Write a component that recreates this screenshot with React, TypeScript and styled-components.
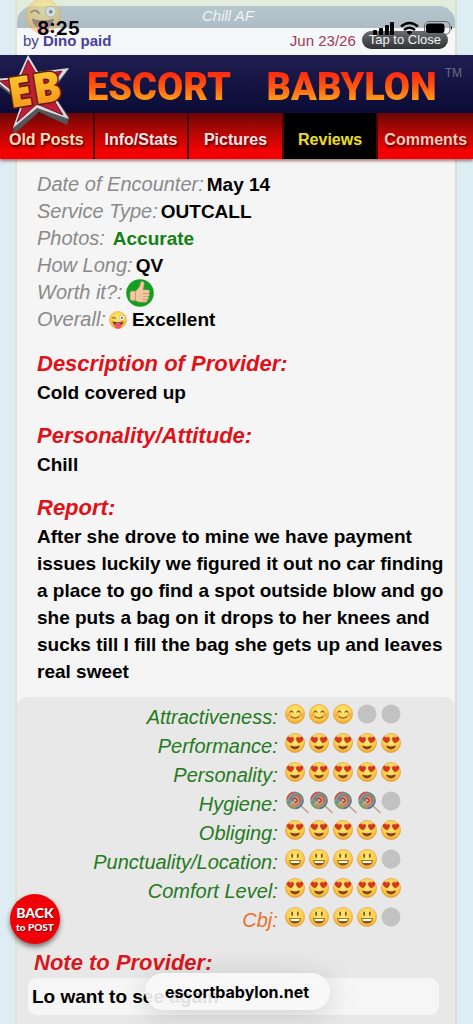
import React from "react";
import styled, { createGlobalStyle } from "styled-components";

const Global = createGlobalStyle`
  * { box-sizing: border-box; }
  body { margin: 0; background: #e0eef4; color: #000; font-family: "Liberation Sans", Arial, sans-serif; }
  h1, h2, p, dl, dd, dt { margin: 0; }
  button { border: 0; cursor: pointer; font-family: inherit; }
  a { text-decoration: none; color: inherit; }
  svg { display: block; flex: none; }
`;

const Page = styled.div`
  position: relative;
  min-height: 100vh;
  overflow: hidden;
  background: linear-gradient(90deg, #deedf3, #e2eff5 50%, #dceef4);
`;

const Card = styled.article`
  margin: 0 16px 0 15px;
  border-left: 2px solid #e0e4cd;
  border-right: 2px solid #dcded2;
  background: #f5f5f5;
`;

const CardTop = styled.header`
  padding-top: 6px;
  background: #e2ecdc;
`;

const Caption = styled.p`
  height: 22px;
  padding-right: 16px;
  border-radius: 16px 16px 0 0;
  background: linear-gradient(#b6c6ce, #adbcc5);
  color: #eef3f5;
  font: italic 15px/20px "Liberation Sans", sans-serif;
  text-align: center;
`;

const Byline = styled.div`
  display: flex;
  align-items: center;
  height: 27px;
  padding: 0 6px 2px;
  background: #f6f7f9;
  font-size: 15px;
  color: #45419c;
`;

const Posted = styled.time`
  margin-left: auto;
  color: #9c3b51;
  font-size: 15px;
`;

const CloseButton = styled.button`
  height: 18px;
  margin: 0 1px 2px 6px;
  padding: 0 7px;
  border-radius: 9px;
  background: linear-gradient(#6a6e70, #303234);
  color: #f2f2f2;
  font-size: 13px;
  line-height: 18px;
  white-space: nowrap;
`;

const SiteHeader = styled.header`
  position: relative;
  box-shadow: 0 2px 3px rgba(90, 0, 0, 0.5);
`;

const Banner = styled.div`
  height: 58px;
  padding: 0 11px 0 87px;
  display: flex;
  align-items: flex-start;
  justify-content: space-between;
  background: linear-gradient(#1f1e50, #0b0b36);
`;

const SiteName = styled.h1`
  display: flex;
  flex: 1;
  justify-content: space-between;
  padding-right: 8px;
  font: 900 38px/64px Roboto, sans-serif;
  background: linear-gradient(#ff2a10 28%, #ff5a10 50%, #ffa21c 72%);
  background-clip: text;
  -webkit-text-fill-color: transparent;
`;

const Trade = styled.span`
  padding-top: 10px;
  font-size: 12px;
  line-height: 16px;
  color: #6a6984;
`;

const Badge = styled.a`
  position: absolute;
  left: 0;
  top: 0;
`;

const Tabs = styled.nav`
  display: grid;
  grid-template-columns: repeat(5, minmax(0, 1fr));
`;

const Tab = styled.a<{ $active?: boolean; $tone?: string }>`
  height: 46px;
  padding-top: 5px;
  border-right: 2px solid #4c0202;
  background: ${(p) => (p.$active ? "#000" : "linear-gradient(#6a0705, #a80805 35%, #ee0303 80%, #f60000)")};
  color: ${(p) => (p.$active ? "#e4e02a" : p.$tone || "#fbe3e3")};
  font: bold 16px/44px "Liberation Sans", Arial, sans-serif;
  text-align: center;
  text-shadow: 1px 2px 2px rgba(50, 0, 0, 0.8);
  white-space: nowrap;
  &:last-child { border-right: 0; }
`;

const Details = styled.div`
  padding: 12px 0 12px 20px;
`;

const Facts = styled.dl`
  margin-bottom: 16px;
`;

const Fact = styled.div`
  display: flex;
  align-items: center;
  height: 27px;
  gap: 3px;
  font-size: 20px;
`;

const FactName = styled.dt`
  color: #8a8a8a;
  font-style: italic;
`;

const FactValue = styled.dd<{ $good?: boolean }>`
  display: flex;
  align-items: center;
  gap: 5px;
  padding-left: ${(p) => (p.$good ? "5px" : "0")};
  color: ${(p) => (p.$good ? "#128012" : "#000")};
  font-size: 19px;
  font-weight: bold;
`;

const Section = styled.section`
  & + & { margin-top: 15px; }
`;

const Heading = styled.h2`
  color: #e01119;
  font: italic bold 22px/30px "Liberation Sans", sans-serif;
`;

const Body = styled.p`
  font-size: 19px;
  font-weight: bold;
  line-height: 27px;
`;

const Ratings = styled.section`
  padding: 6px 0 11px;
  border-radius: 10px 10px 0 0;
  background: #e8e8e8;
`;

const Rating = styled.div`
  display: grid;
  grid-template-columns: 3fr 2fr;
  height: 29px;
`;

const RatingName = styled.dt<{ $accent?: boolean }>`
  padding-right: 2px;
  color: ${(p) => (p.$accent ? "#e8702c" : "#247a1c")};
  font-size: 20px;
  font-style: italic;
  line-height: 29px;
  text-align: right;
`;

const Marks = styled.dd`
  display: flex;
  gap: 4px;
  padding: 1px 0 0 5px;
`;

const Note = styled.div`
  padding: 13px 16px 0 11px;
  ${Heading} { padding-left: 6px; color: #d81820; }
`;

const NoteText = styled.p`
  height: 37px;
  padding-left: 4px;
  border-radius: 9px;
  background: #f6f6f6;
  font-size: 19px;
  font-weight: bold;
  line-height: 37px;
`;

const BackButton = styled.a`
  position: absolute;
  left: 10px;
  top: 894px;
  display: flex;
  flex-direction: column;
  align-items: center;
  justify-content: center;
  width: 50px;
  height: 50px;
  border-radius: 50%;
  background: #f00006;
  box-shadow: 0 3px 5px rgba(0, 0, 0, 0.5);
  color: #fff;
  font: 900 10px/13px Lato, sans-serif;
  text-shadow: 1px 1px 1px rgba(70, 0, 0, 0.8);
  white-space: nowrap;
  strong { font-size: 14px; line-height: 16px; font-weight: 900; }
`;

const StatusTime = styled.time`
  position: absolute;
  left: 37px;
  top: 18px;
  font: bold 19px/22px Inter, sans-serif;
`;

const StatusIcons = styled.div`
  position: absolute;
  right: 20px;
  top: 21px;
`;

const AddressPill = styled.button`
  position: absolute;
  left: 50%;
  bottom: 16px;
  margin-left: -92px;
  width: 185px;
  height: 37px;
  border-radius: 19px;
  background: rgba(248, 248, 248, 0.9);
  box-shadow: 0 4px 30px rgba(0, 0, 0, 0.16);
  color: #000;
  font: bold 16px/36px Inter, sans-serif;
`;

type Kind = "smile" | "love" | "candy" | "grin" | "none";

function Defs() {
  return (
    <svg width="0" height="0" style={{ position: "absolute" }} aria-hidden="true">
      <defs>
        <radialGradient id="face" cx="50%" cy="38%" r="65%">
          <stop offset="0" stopColor="#ffec78" />
          <stop offset="0.65" stopColor="#fccd48" />
          <stop offset="1" stopColor="#ea982e" />
        </radialGradient>
        <linearGradient id="gold" x1="0" y1="0" x2="0" y2="1">
          <stop offset="0" stopColor="#ffd83a" />
          <stop offset="1" stopColor="#f58a16" />
        </linearGradient>
      </defs>
    </svg>
  );
}

function Mark({ kind }: { kind: Kind }) {
  if (kind === "none")
    return <svg width="20" height="20" viewBox="0 0 20 20"><circle cx="10" cy="10" r="9.5" fill="#c2c2c2" /></svg>;
  if (kind === "candy")
    return (
      <svg width="20" height="20" viewBox="0 0 20 20" overflow="visible">
        <path d="M16 15l7 6.500" stroke="#c9a184" strokeWidth="1.700" strokeLinecap="round" />
        <circle cx="10" cy="9.500" r="8.700" fill="#b5b498" />
        <g fill="none" strokeWidth="2">
          <path d="M2 8.500A8 8 0 0 1 10 1.500" stroke="#c9544a" />
          <path d="M10 1.800A8 8 0 0 1 17.800 9" stroke="#5b8f92" />
          <path d="M17.800 9A8 8 0 0 1 11 17.300" stroke="#497fa8" />
          <path d="M11 17.300A8 8 0 0 1 2.200 9.500" stroke="#79986a" />
          <path d="M4.800 12.500C3.500 8 6.500 4 10.500 4.300" stroke="#4a8c9c" />
          <path d="M10.500 4.300c4 .3 5.800 4 4.200 7.500" stroke="#d2523f" />
          <path d="M14.700 11.800c-2 3.800-6.500 3.800-8 1" stroke="#d77a45" />
          <path d="M7.500 10.500C6.500 7 10.500 6 12 8.500c.7 2-1 3.500-2.500 2.500" stroke="#b9433c" strokeWidth="1.700" />
        </g>
      </svg>
    );
  return (
    <svg width="20" height="20" viewBox="0 0 20 20">
      <circle cx="10" cy="10" r="9.600" fill="url(#face)" stroke="#e39a38" strokeWidth="0.600" />
      {kind === "smile" && (
        <g fill="none" stroke="#81512a" strokeWidth="1.100" strokeLinecap="round">
          <circle cx="3.800" cy="11" r="2" fill="#f59549" stroke="none" opacity="0.700" />
          <circle cx="16.200" cy="11" r="2" fill="#f59549" stroke="none" opacity="0.700" />
          <path d="M5 8.300q1.500-2.300 3 0M12 8.300q1.500-2.300 3 0M6 12.500q4 3.300 8 0" />
        </g>
      )}
      {kind === "love" && (
        <>
          <g fill="#d93524" stroke="#a72c1b" strokeWidth="0.400">
            <path d="M6.200 10C3.500 9 1.600 7.200 2 5.200 2.600 3.600 4.700 3.500 5.400 4.900 6.400 3.700 8.500 4 8.800 5.600c.2 1.800-1 3-2.600 4.400z" />
            <path d="M13.800 10c2.700-1 4.600-2.800 4.200-4.800-.6-1.600-2.700-1.700-3.400-.3-1-1.200-3.100-.9-3.400.7-.2 1.800 1 3 2.600 4.400z" />
          </g>
          <path d="M5 12.600q5 1.600 10 0-1 3.800-5 3.800t-5-3.800z" fill="#7f421b" />
        </>
      )}
      {kind === "grin" && (
        <>
          <g fill="#76502a"><ellipse cx="7.200" cy="6.800" rx="0.900" ry="2.300" /><ellipse cx="12.800" cy="6.800" rx="0.900" ry="2.300" /></g>
          <path d="M4 11.300h12q-.8 5.200-6 5.200t-6-5.200z" fill="#805322" />
          <path d="M5.200 12h9.600q-.4 2-1 2H6.200q-.7 0-1-2z" fill="#fff8df" />
        </>
      )}
    </svg>
  );
}

function Wink({ size }: { size: number }) {
  return (
    <svg width={size} height={size} viewBox="0 0 20 20">
      <circle cx="10" cy="10" r="9.600" fill="url(#face)" stroke="#dfa048" strokeWidth="0.400" />
      <path d="M3.500 7.800q2.500-2 4.200.7" fill="none" stroke="#7c4b28" strokeWidth="1.100" strokeLinecap="round" />
      <circle cx="14.300" cy="7.600" r="3" fill="#fffdf2" stroke="#a7977c" strokeWidth="0.500" />
      <circle cx="14.300" cy="7.600" r="1" fill="#303020" />
      <path d="M3.800 11.400q6.200 2.300 12.400 0-.7 5.600-6.200 5.600t-6.200-5.600z" fill="#734024" />
      <path d="M6.600 14.200q3.500-2.200 6.800 0v2.600q0 3-3.400 3t-3.400-3z" fill="#f04c78" />
    </svg>
  );
}

function Thumb() {
  return (
    <svg width="28" height="28" viewBox="0 0 28 28">
      <circle cx="14" cy="14" r="13.800" fill="#12a022" />
      <path d="M4 14q0-2 2-2h3.500c2.500-2 4.500-4.500 5-8 .3-2.600 3.700-2 3.700 1 0 2.200-.8 4-1.200 5.800h4.800c2.300 0 2.600 3 .8 3.500 1.400.9 1 3-.4 3.300 1.100 1 .5 2.900-.8 3 .5 1.500-.5 2.600-2 2.600-5 .2-7.400.1-9.400-1.400H6q-2 0-2-2z" fill="#f0c9a3" stroke="#a77d56" strokeWidth="0.600" />
      <path d="M9.500 12v9.500M17 14.500h5M17 17.700h5M16.500 20.700h4.500" stroke="#bd8c68" strokeWidth="0.800" fill="none" />
    </svg>
  );
}

function StarLogo() {
  return (
    <svg width="74" height="76" viewBox="0 0 74 76" overflow="visible">
      <path d="M28 0L38 17 69 14 52 37 69 62 67 70 39 57 14 79 13 72 22 49-6 27 18 24z" fill="#55555a" />
      <path d="M28 0L38 17 69 13 51 36 69 64 37 53 13 73 22 47-6 24 18 22z" fill="#d9d9de" />
      <path d="M28 5L37 20 62 16 48 36 63 60 37 49 17 67 25 46 0 26 20 24z" fill="#c01c38" stroke="#76152b" strokeWidth="1" />
      <g transform="rotate(-9 35 34)" fontFamily="Open Sans, sans-serif" fontWeight="800" fontSize="42" fill="url(#gold)" stroke="#5d1d08" strokeWidth="3" paintOrder="stroke" strokeLinejoin="round">
        <text x="8" y="49">E</text>
        <text x="33" y="49">B</text>
      </g>
    </svg>
  );
}

function SystemIcons() {
  return (
    <svg width="80" height="15" viewBox="0 0 80 15" role="img" aria-label="Signal, wifi and battery">
      <rect x="0" y="9" width="4" height="5" rx="1" />
      <rect x="6" y="7" width="4" height="7" rx="1" />
      <rect x="12" y="4" width="4" height="10" rx="1" />
      <rect x="17" y="1" width="4" height="13" rx="1" />
      <g fill="none" stroke="#000" strokeWidth="2.600">
        <path d="M28 5.500q8.500-7 17 0M31 9q5.500-4.500 11 0" />
      </g>
      <path d="M33.500 11q3-2.300 6 0l-3 3z" />
      <rect x="51.500" y="0.500" width="25.500" height="13" rx="4.500" fill="none" stroke="#666" />
      <rect x="53" y="2.500" width="18.500" height="9.500" rx="3" />
      <path d="M78 5q2 2 0 4z" />
    </svg>
  );
}

const sections = [
  ["Description of Provider:", "Cold covered up"],
  ["Personality/Attitude:", "Chill"],
  ["Report:", "After she drove to mine we have payment issues luckily we figured it out no car finding a place to go find a spot outside blow and go she puts a bag on it drops to her knees and sucks till I fill the bag she gets up and leaves real sweet"],
];

const ratings: [string, Kind, number][] = [
  ["Attractiveness:", "smile", 3],
  ["Performance:", "love", 5],
  ["Personality:", "love", 5],
  ["Hygiene:", "candy", 4],
  ["Obliging:", "love", 5],
  ["Punctuality/Location:", "grin", 4],
  ["Comfort Level:", "love", 5],
  ["Cbj:", "grin", 4],
];

const CornerFace = styled.div`
  position: absolute;
  left: 25px;
  top: -2px;
  opacity: 0.45;
`;

export default function App() {
  return (
    <Page>
      <Global />
      <Defs />
      <Card as="div">
        <CardTop>
          <Caption>Chill AF</Caption>
          <Byline>
            <span>by <b>Dino paid</b></span>
            <Posted>Jun 23/26</Posted>
            <CloseButton>Tap to Close</CloseButton>
          </Byline>
        </CardTop>
      </Card>
      <CornerFace><Wink size={36} /></CornerFace>
      <SiteHeader>
        <Banner>
          <SiteName><span>ESCORT</span> <span>BABYLON</span></SiteName>
          <Trade>TM</Trade>
        </Banner>
        <Tabs>
          <Tab href="#posts" $tone="#f7dfba">Old Posts</Tab>
          <Tab href="#info">Info/Stats</Tab>
          <Tab href="#pictures">Pictures</Tab>
          <Tab href="#reviews" $active>Reviews</Tab>
          <Tab href="#comments" $tone="#f9c9ba">Comments</Tab>
        </Tabs>
        <Badge href="#home" aria-label="Home"><StarLogo /></Badge>
      </SiteHeader>
      <Card>
        <Details>
          <Facts>
            <Fact><FactName>Date of Encounter:</FactName><FactValue>May 14</FactValue></Fact>
            <Fact><FactName>Service Type:</FactName><FactValue>OUTCALL</FactValue></Fact>
            <Fact><FactName>Photos:</FactName><FactValue $good>Accurate</FactValue></Fact>
            <Fact><FactName>How Long:</FactName><FactValue>QV</FactValue></Fact>
            <Fact><FactName>Worth it?:</FactName><FactValue><Thumb /></FactValue></Fact>
            <Fact><FactName>Overall:</FactName><FactValue><Wink size={18} />Excellent</FactValue></Fact>
          </Facts>
          {sections.map(([title, text]) => (
            <Section key={title}>
              <Heading>{title}</Heading>
              <Body>{text}</Body>
            </Section>
          ))}
        </Details>
        <Ratings>
          <dl>
            {ratings.map(([name, kind, score]) => (
              <Rating key={name}>
                <RatingName $accent={name === "Cbj:"}>{name}</RatingName>
                <Marks aria-label={`${score} of 5`}>
                  {[0, 1, 2, 3, 4].map((i) => <Mark key={i} kind={i < score ? kind : "none"} />)}
                </Marks>
              </Rating>
            ))}
          </dl>
          <Note>
            <Heading>Note to Provider:</Heading>
            <NoteText>Lo want to see again</NoteText>
          </Note>
        </Ratings>
      </Card>
      <BackButton href="#post"><strong>BACK</strong>to POST</BackButton>
      <StatusTime>8:25</StatusTime>
      <StatusIcons><SystemIcons /></StatusIcons>
      <AddressPill>escortbabylon.net</AddressPill>
    </Page>
  );
}
